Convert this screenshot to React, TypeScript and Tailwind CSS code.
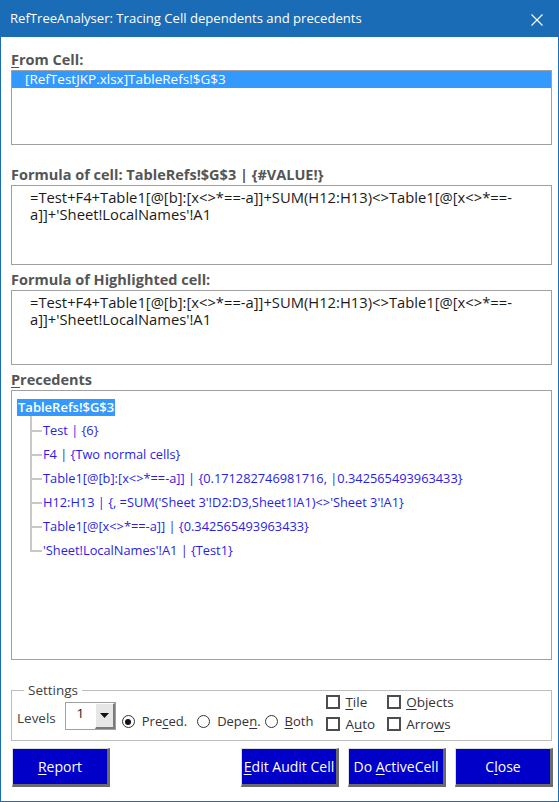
import React from "react";

const ui = "font-['Open_Sans',sans-serif]";

function U({ children }: { children: React.ReactNode }) {
  return <span className="underline decoration-1 underline-offset-[2px]">{children}</span>;
}

function Label({ children, className = "" }: { children: React.ReactNode; className?: string }) {
  return (
    <div className={`h-[21px] text-[14.5px] leading-[21px] font-bold text-[#555555] ${className}`}>
      {children}
    </div>
  );
}

const formula1 = "=Test+F4+Table1[@[b]:[x<>*==-a]]+SUM(H12:H13)<>Table1[@[x<>*==-";
const formula2 = "a]]+'Sheet!LocalNames'!A1";

function FormulaBox({ height }: { height: string }) {
  return (
    <div className={`w-[541px] ${height} border border-[#a0a0a0] bg-white pl-[18px] pt-[3px] text-[14.75px] leading-[17px] text-[#1a1a1a]`}>
      <div className="whitespace-pre">{formula1}</div>
      <div className="whitespace-pre">{formula2}</div>
    </div>
  );
}

const precedents = [
  "Test | {6}",
  "F4 | {Two normal cells}",
  "Table1[@[b]:[x<>*==-a]] | {0.171282746981716, |0.342565493963433}",
  "H12:H13 | {, =SUM('Sheet 3'!D2:D3,Sheet1!A1)<>'Sheet 3'!A1}",
  "Table1[@[x<>*==-a]] | {0.342565493963433}",
  "'Sheet!LocalNames'!A1 | {Test1}",
];

function TreeRow({ text, first, last }: { text: string; first: boolean; last: boolean }) {
  return (
    <div className="relative flex h-[24px] items-center pl-[31px]">
      <span
        className={`absolute left-[18px] w-[2px] bg-[#c8c8c8] ${first ? "-top-[3px]" : "top-0"} ${
          last ? "h-[13px]" : "bottom-0"
        }`}
      />
      <span className="absolute left-[18px] top-[11px] h-[2px] w-[12px] bg-[#c8c8c8]" />
      <span className="whitespace-pre text-[12.8px] text-[#2a1ee6]">{text}</span>
    </div>
  );
}

function Radio({ checked, children, className = "" }: { checked?: boolean; children: React.ReactNode; className?: string }) {
  return (
    <div className={`flex items-center ${className}`}>
      <span className="flex h-[13px] w-[13px] items-center justify-center rounded-full border border-[#333333] bg-white">
        {checked && <span className="h-[6px] w-[6px] rounded-full bg-[#111111]" />}
      </span>
      <span className="ml-[7px] text-[13px] text-[#333333]">{children}</span>
    </div>
  );
}

function Check({ children }: { children: React.ReactNode }) {
  return (
    <div className="flex h-[14px] items-center">
      <span className="h-[14px] w-[14px] border-2 border-[#4d4d4d] bg-white" />
      <span className="ml-[5px] text-[13.5px] text-[#333333]">{children}</span>
    </div>
  );
}

function Btn({ children, className = "" }: { children: React.ReactNode; className?: string }) {
  return (
    <button
      className={`h-[39px] w-[98px] border-t border-l border-t-[#dcdcdc] border-l-[#dcdcdc] border-r-[3px] border-b-[3px] border-r-[#6b6b6b] border-b-[#6b6b6b] bg-[#0000c8] text-[14px] text-white ${className}`}
    >
      {children}
    </button>
  );
}

export default function App() {
  return (
    <div className={`${ui} flex h-[802px] w-[559px] flex-col border border-[#1b6cb6] bg-white`}>
      {/* title bar */}
      <div className="flex h-[36px] shrink-0 items-center justify-between bg-[#1b6cb6] pl-[9px] pr-[15px] text-white">
        <span className="text-[13.1px]">RefTreeAnalyser: Tracing Cell dependents and precedents</span>
        <svg width="12" height="12" viewBox="0 0 12 12" className="mt-[1px]">
          <path d="M0.5 0.5 L11.5 11.5 M11.5 0.5 L0.5 11.5" stroke="white" strokeWidth="1.1" />
        </svg>
      </div>

      <div className="flex flex-col pl-[10px]">
        <Label className="mt-[12px]">
          <U>F</U>rom Cell:
        </Label>
        <div className="h-[75px] w-[541px] border border-[#a0a0a0] bg-white">
          <div className="h-[17px] bg-[#3399ff] pl-[13px] text-[13.5px] leading-[17px] text-white">
            [RefTestJKP.xlsx]TableRefs!$G$3
          </div>
        </div>

        <Label className="mt-[19px]">Formula of cell: TableRefs!$G$3 | {"{#VALUE!}"}</Label>
        <FormulaBox height="h-[80px]" />

        <Label className="mt-[4px]">Formula of Highlighted cell:</Label>
        <FormulaBox height="h-[75px]" />

        <Label className="mt-[4px]">
          <U>P</U>recedents
        </Label>
        <div className="h-[270px] w-[541px] border border-[#a0a0a0] bg-white pt-[8px]">
          <div className="flex pl-[5px]">
            <span className="h-[17px] bg-[#3399ff] px-[1px] text-[13px] font-semibold leading-[17px] text-white">
              TableRefs!$G$3
            </span>
          </div>
          <div className="mt-[3px]">
            {precedents.map((p, i) => (
              <TreeRow key={i} text={p} first={i === 0} last={i === precedents.length - 1} />
            ))}
          </div>
        </div>

        {/* settings */}
        <div className="relative mt-[30px] flex h-[51px] w-[541px] items-start border border-[#bdbdbd]">
          <span className="absolute -top-[11px] left-[12px] bg-white px-[4px] text-[13.5px] text-[#404040]">
            Settings
          </span>
          <span className="ml-[5px] mt-[17px] text-[13.5px] leading-[20px] text-[#404040]">Levels</span>
          <div className="ml-[9px] mt-[11px] flex h-[28px] w-[51px] border border-[#a0a0a0] bg-white">
            <span className="flex-1 pt-[1px] text-center text-[13.5px] leading-[18px] text-[#222222]">1</span>
            <span className="flex w-[20px] items-center justify-center border-r-2 border-b-2 border-r-[#7a7a7a] border-b-[#7a7a7a] border-t border-l border-t-white border-l-white bg-[#e6e6e6]">
              <svg width="9" height="5" viewBox="0 0 9 5">
                <path d="M0 0 H9 L4.5 5 Z" fill="#111111" />
              </svg>
            </span>
          </div>
          <Radio checked className="ml-[6px] mt-[21px]">
            Pre<U>c</U>ed.
          </Radio>
          <Radio className="ml-[10px] mt-[21px]">
            Depe<U>n</U>.
          </Radio>
          <Radio className="ml-[4px] mt-[21px]">
            <U>B</U>oth
          </Radio>
          <div className="ml-[13px] mt-[4px] flex flex-col gap-[8px]">
            <Check>
              <U>T</U>ile
            </Check>
            <Check>
              A<U>u</U>to
            </Check>
          </div>
          <div className="ml-[12px] mt-[4px] flex flex-col gap-[8px]">
            <Check>
              <U>O</U>bjects
            </Check>
            <Check>
              Arro<U>w</U>s
            </Check>
          </div>
        </div>

        {/* buttons */}
        <div className="mt-[7px] flex w-[542px]">
          <Btn className="ml-[1px]">
            <U>R</U>eport
          </Btn>
          <Btn className="ml-auto">
            <U>E</U>dit Audit Cell
          </Btn>
          <Btn className="ml-[9px]">
            Do <U>A</U>ctiveCell
          </Btn>
          <Btn className="ml-[9px]">
            C<U>l</U>ose
          </Btn>
        </div>
      </div>
    </div>
  );
}
